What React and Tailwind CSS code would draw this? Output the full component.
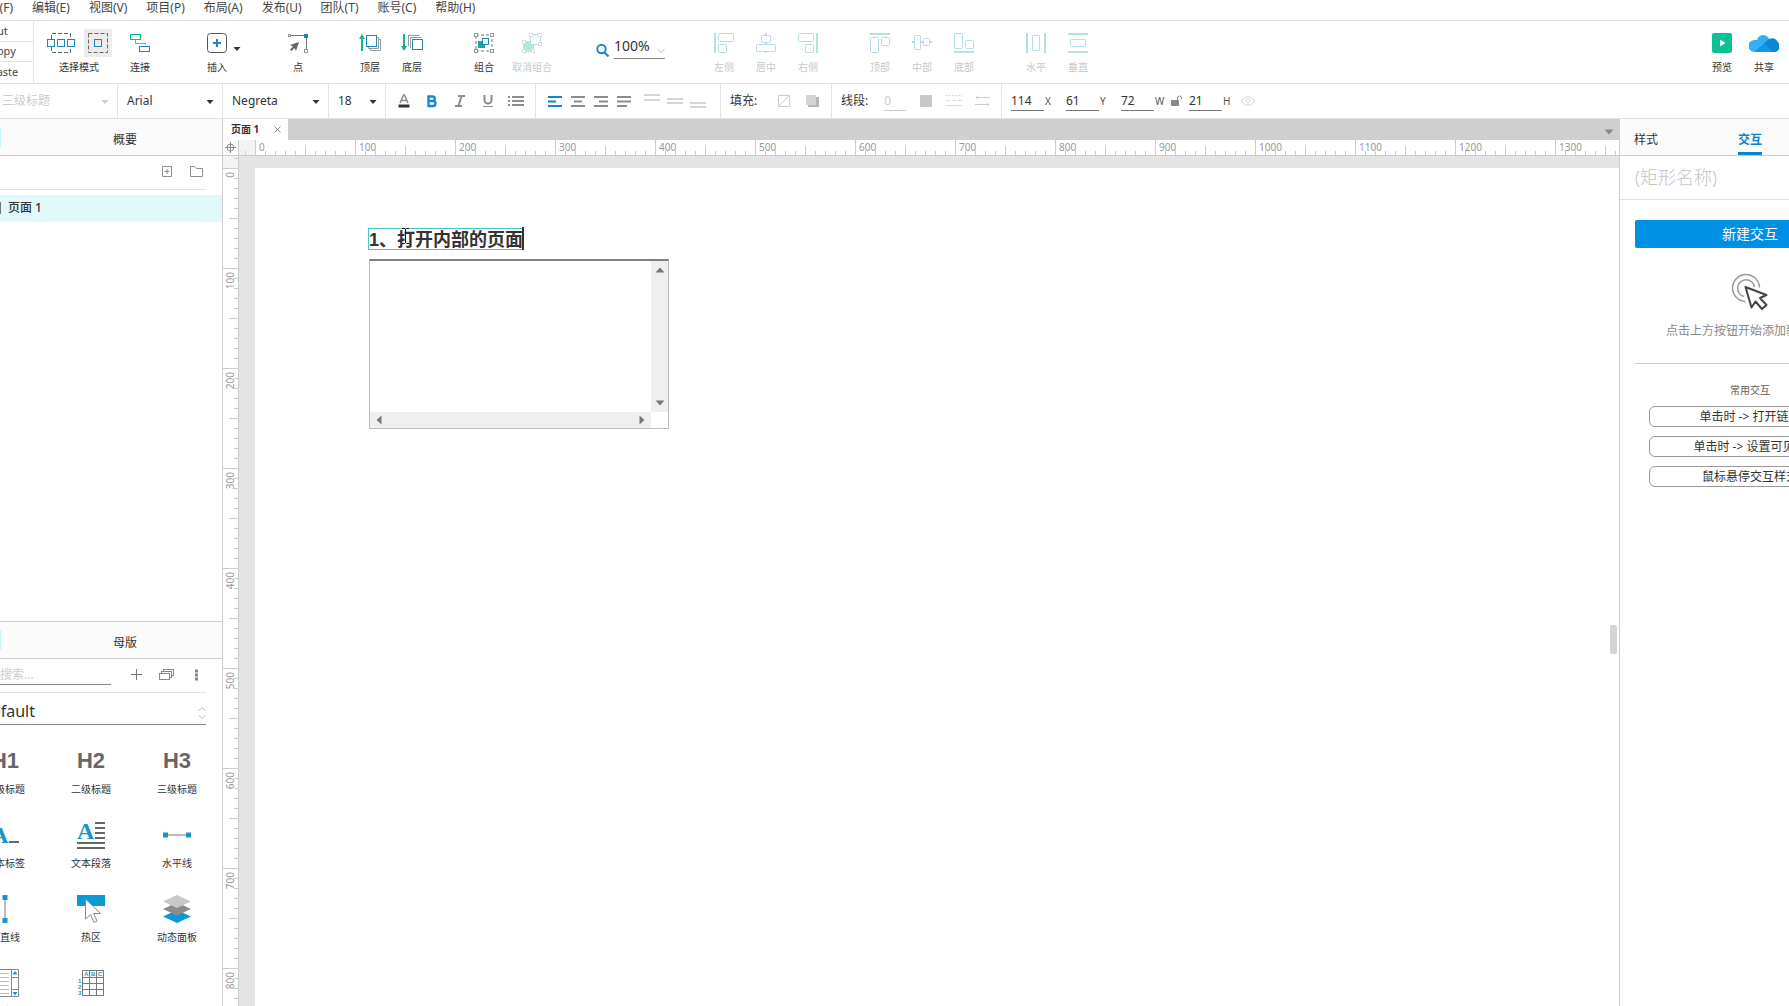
const MENU = ["编辑(E)", "视图(V)", "项目(P)", "布局(A)", "发布(U)", "团队(T)", "账号(C)", "帮助(H)"];

const BLUE = "#1e86b8";
const GREEN = "#12b886";
const GRAY = "#8c8c8c";

function Caret({ className = "" }) {
  return (
    <svg className={`w-2 h-1 ${className}`} viewBox="0 0 8 4" fill="currentColor">
      <path d="M0.5 0h7L4 4z" />
    </svg>
  );
}

function ScrollArrow({ className = "" }) {
  return (
    <svg className={`size-[10px] ${className}`} viewBox="0 0 10 10" fill="currentColor">
      <path d="M0.5 2.5h9L5 7.500z" />
    </svg>
  );
}

function Icon({ children, w = 20, h = 20 }) {
  return (
    <svg width={w} height={h} viewBox={`0 0 ${w} ${h}`} fill="none" className="shrink-0">
      {children}
    </svg>
  );
}

function Tool({ label, children, disabled, className = "w-[42px]" }) {
  return (
    <button
      type="button"
      disabled={disabled}
      className={`flex flex-col items-center shrink-0 text-[10px] leading-5 whitespace-nowrap ${
        disabled ? "text-[#c8c8c8]" : "text-[#333]"
      } ${className}`}
    >
      <span className="flex h-7 items-center">{children}</span>
      {label}
    </button>
  );
}

function Handles({ color, points }) {
  return points.map(([x, y]) => (
    <rect key={`${x}-${y}`} x={x} y={y} width="3" height="3" fill="#fff" stroke={color} />
  ));
}

function MenuBar() {
  return (
    <nav className="flex h-[21px] items-start gap-[19px] overflow-hidden border-b border-[#e2e2e2] text-xs leading-4 text-[#444]">
      <div className="flex w-[13px] shrink-0 justify-end">
        <button type="button" className="whitespace-nowrap">文件(F)</button>
      </div>
      {MENU.map((item) => (
        <button key={item} type="button" className="shrink-0 whitespace-nowrap">
          {item}
        </button>
      ))}
    </nav>
  );
}

function Clipboard() {
  return (
    <div className="grid w-[34px] shrink-0 grid-rows-3 divide-y divide-[#e2e2e2] overflow-hidden border-r border-[#e2e2e2] text-[11px] text-[#444]">
      {["Cut", "Copy", "Paste"].map((item) => (
        <button key={item} type="button" className="-ml-[10px] text-left">
          {item}
        </button>
      ))}
    </div>
  );
}

function SelectMode() {
  return (
    <div className="ml-[11px] flex w-[68px] shrink-0 flex-col items-center text-[10px] leading-5 text-[#333]">
      <div className="flex h-7 items-center gap-[9px]">
        <button type="button" aria-label="相交选择">
          <Icon w={28}>
            <path d="M4.5 6V0.5h19V6M4.5 14v5.5h19V14" stroke="#666" strokeDasharray="4 2" />
            <g stroke={BLUE} fill="#fff">
              <rect x="0.5" y="6.5" width="7" height="7" />
              <rect x="10.5" y="6.5" width="7" height="7" />
              <rect x="20.5" y="6.5" width="7" height="7" />
            </g>
          </Icon>
        </button>
        <button type="button" aria-label="包含选择" className="flex size-7 items-center justify-center bg-[#ececec]">
          <Icon>
            <rect x="0.5" y="0.5" width="19" height="19" stroke="#666" strokeDasharray="4 2" />
            <rect x="6.5" y="6.5" width="7" height="7" stroke={BLUE} />
          </Icon>
        </button>
      </div>
      选择模式
    </div>
  );
}

function AlignTools() {
  const line = "#b4e4d6";
  const box = "#b4dbe8";
  return (
    <>
      <div className="flex">
        <Tool label="左侧" disabled>
          <Icon>
            <path d="M1 0v20" stroke={line} strokeWidth="2" />
            <rect x="4.5" y="0.5" width="15" height="8" rx="1" stroke={box} />
            <rect x="4.5" y="11.5" width="8" height="8" rx="1" stroke={box} />
          </Icon>
        </Tool>
        <Tool label="居中" disabled>
          <Icon>
            <path d="M10 0v20" stroke={box} strokeWidth="2" />
            <rect x="5.5" y="2.5" width="9" height="7" rx="1" stroke={box} fill="#fff" />
            <rect x="0.5" y="11.5" width="19" height="7" rx="1" stroke={box} fill="#fff" />
          </Icon>
        </Tool>
        <Tool label="右侧" disabled>
          <Icon>
            <path d="M19 0v20" stroke={line} strokeWidth="2" />
            <rect x="0.5" y="0.5" width="15" height="8" rx="1" stroke={box} />
            <rect x="7.5" y="11.5" width="8" height="8" rx="1" stroke={box} />
          </Icon>
        </Tool>
      </div>
      <div className="flex">
        <Tool label="顶部" disabled>
          <Icon>
            <path d="M0 1h20" stroke={line} strokeWidth="2" />
            <rect x="0.5" y="4.5" width="8" height="15" rx="1" stroke={box} />
            <rect x="11.5" y="4.5" width="8" height="8" rx="1" stroke={box} />
          </Icon>
        </Tool>
        <Tool label="中部" disabled>
          <Icon>
            <path d="M0 9h20" stroke={box} strokeWidth="2" />
            <rect x="2.5" y="2.5" width="6" height="14" rx="1" stroke={box} fill="#fff" />
            <rect x="11.5" y="5.5" width="6" height="7" rx="1" stroke={box} fill="#fff" />
          </Icon>
        </Tool>
        <Tool label="底部" disabled>
          <Icon>
            <path d="M0 19h20" stroke={line} strokeWidth="2" />
            <rect x="0.5" y="0.5" width="8" height="15" rx="1" stroke={box} />
            <rect x="11.5" y="7.5" width="8" height="8" rx="1" stroke={box} />
          </Icon>
        </Tool>
      </div>
      <div className="flex">
        <Tool label="水平" disabled>
          <Icon>
            <path d="M1 0v20M19 0v20" stroke={line} strokeWidth="2" />
            <rect x="6.5" y="2.5" width="7" height="15" rx="1" stroke={box} />
          </Icon>
        </Tool>
        <Tool label="垂直" disabled>
          <Icon>
            <path d="M0 1h20M0 19h20" stroke={line} strokeWidth="2" />
            <rect x="2.5" y="6.5" width="15" height="7" rx="1" stroke={box} />
          </Icon>
        </Tool>
      </div>
    </>
  );
}

function Toolbar() {
  return (
    <div className="flex h-[63px] border-b border-[#e2e2e2]">
      <Clipboard />
      <div className="flex flex-1 items-start pt-2">
        <SelectMode />
        <Tool label="连接" className="ml-[6px] w-[42px]">
          <Icon>
            <path d="M5.5 6v4.5h10V12" stroke="#999" />
            <rect x="0.5" y="1.5" width="10" height="5" stroke={GREEN} />
            <rect x="9.5" y="13.5" width="10" height="5" stroke={BLUE} />
          </Icon>
        </Tool>
        <div className="ml-9 flex w-11 items-start">
          <Tool label="插入" className="w-10">
            <Icon>
              <rect x="0.5" y="0.5" width="19" height="19" rx="3" stroke="#555" />
              <path d="M10 6v8M6 10h8" stroke={BLUE} strokeWidth="2" />
            </Icon>
          </Tool>
          <button type="button" aria-label="更多插入" className="-ml-1 mt-[18px] text-[#333]">
            <Caret />
          </button>
        </div>
        <div className="ml-9 flex items-start gap-[30px]">
          <Tool label="点">
            <Icon>
              <path d="M3 2.5h14M18.500 4v13" stroke="#777" />
              <rect x="0.500" y="1.500" width="2" height="2" stroke="#999" />
              <rect x="16" y="1" width="4" height="4" fill={BLUE} />
              <rect x="16.500" y="16.500" width="3" height="3" stroke="#999" fill="#fff" />
              <path d="M11 9L2 12l3 1.500-3 3 1.500 1.500 3-3L8 18z" fill="#666" />
            </Icon>
          </Tool>
          <div className="flex">
            <Tool label="顶层">
              <Icon w={22}>
                <path d="M3 18V5" stroke={GREEN} strokeWidth="2" />
                <path d="M0 6l3-5 3 5z" fill={GREEN} />
                <path d="M11.500 16v1.500h10v-11H20" stroke="#999" />
                <path d="M9.500 14v1.500h10v-11H18" stroke="#999" />
                <rect x="7.500" y="2.500" width="10" height="11" fill="#fff" stroke={BLUE} />
              </Icon>
            </Tool>
            <Tool label="底层">
              <Icon w={22}>
                <path d="M3 1v13" stroke={GREEN} strokeWidth="2" />
                <path d="M0 13l3 5 3-5z" fill={GREEN} />
                <path d="M7.500 13V2.500h11" stroke="#999" />
                <path d="M9.500 15V4.500h11" stroke="#999" />
                <rect x="11.500" y="6.500" width="10" height="10" fill="#fff" stroke={BLUE} />
              </Icon>
            </Tool>
          </div>
          <div className="flex">
            <Tool label="组合">
              <Icon>
                <rect x="2" y="2" width="16" height="16" stroke="#777" strokeDasharray="3 2" />
                <Handles color="#999" points={[[0.5, 0.5], [16.5, 0.5], [0.5, 16.5], [16.5, 16.5]]} />
                <rect x="4" y="8" width="7" height="7" fill="#12a99a" />
                <rect x="8.500" y="5.500" width="6" height="6" fill="#fff" stroke={BLUE} />
              </Icon>
            </Tool>
            <Tool label="取消组合" disabled className="w-[54px]">
              <Icon>
                <rect x="1" y="8" width="11" height="11" fill="#b4e8d8" />
                <rect x="8.500" y="1.500" width="10" height="10" fill="#fff" stroke="#b4dbe8" />
                <Handles
                  color="#ddd"
                  points={[[7.5, 0.5], [16.5, 0.5], [16.5, 9.5], [0.5, 7.5], [0.5, 16.5], [9.5, 16.5]]}
                />
              </Icon>
            </Tool>
          </div>
        </div>
        <div className="ml-[37px] flex shrink-0 items-end gap-[5px] pt-1">
          <svg width="13" height="14" viewBox="0 0 13 14" fill="none" stroke="#1b87c9" strokeWidth="2" className="mb-[2px]">
            <circle cx="5.500" cy="6" r="4.200" />
            <path d="M8.500 9.500l4 4" />
          </svg>
          <label className="relative flex h-[26px] w-[51px] border-b border-[#888]">
            <span className="sr-only">缩放</span>
            <select className="w-full appearance-none bg-transparent text-sm leading-5 text-[#333]">
              <option>100%</option>
            </select>
            <svg viewBox="0 0 8 4" fill="none" stroke="#bbb" className="absolute right-0 bottom-[5px] h-1 w-2">
              <path d="M0.500 0L4 3.500 7.500 0" />
            </svg>
          </label>
        </div>
        <div className="ml-[38px] flex items-start gap-[30px]">
          <AlignTools />
        </div>
        <div className="ml-auto flex pr-1">
          <Tool label="预览">
            <Icon>
              <rect width="20" height="20" rx="2" fill="#0ac295" />
              <path d="M8 6.500v7l5.500-3.500z" fill="#fff" />
            </Icon>
          </Tool>
          <Tool label="共享">
            <Icon w={30}>
              <path d="M6 19a6 6 0 0 1-1-12h3a6.500 6.500 0 0 1 11-3l2 3a6 6 0 0 1 4 12z" fill="#36aef5" />
              <path d="M5 19L19 7a5 5 0 0 1 6 1 5.500 5.500 0 0 1 0 11z" fill="#1496e2" />
              <path d="M15 10.500L24 19h1a5.500 5.500 0 0 0 4-9.500A6 6 0 0 0 19 7z" fill="#0d87d4" />
            </Icon>
          </Tool>
        </div>
      </div>
    </div>
  );
}

function Dropdown({ label, value, disabled, className }) {
  return (
    <label className={`relative flex shrink-0 items-center border-r border-[#e2e2e2] ${className}`}>
      <span className="sr-only">{label}</span>
      <select
        disabled={disabled}
        className={`w-full appearance-none bg-transparent text-xs leading-5 opacity-100 ${
          disabled ? "text-[#ccc]" : "text-[#333]"
        }`}
      >
        <option>{value}</option>
      </select>
      <Caret className={`absolute right-2 top-4 ${disabled ? "text-[#ccc]" : "text-[#333]"}`} />
    </label>
  );
}

function NumberField({ label, value }) {
  return (
    <label className="flex items-center gap-px text-[10px] text-[#555]">
      <input
        defaultValue={value}
        className="h-[19px] w-[33px] border-b border-[#777] text-xs text-[#333] outline-none"
      />
      <span className="w-[9px]">{label}</span>
    </label>
  );
}

function FormatButton({ label, children, className = "w-[23px]" }) {
  return (
    <button type="button" aria-label={label} className={`flex shrink-0 justify-center ${className}`}>
      {children}
    </button>
  );
}

const ALIGNS = [
  { label: "左对齐", d: "M0 2h14M0 6.500h8M0 11h14", color: "#1286c6" },
  { label: "居中对齐", d: "M0 2h14M3 6.500h8M0 11h14", color: GRAY },
  { label: "右对齐", d: "M0 2h14M5 6.500h9M0 11h14", color: GRAY },
  { label: "两端对齐", d: "M0 2h14M0 6.500h14M0 11h10", color: GRAY },
];

const VALIGNS = [
  { label: "顶端", d: "M0 1h16M0 6h16" },
  { label: "垂直居中", d: "M0 5h16M0 9h16" },
  { label: "底端", d: "M0 9h16M0 13h16" },
];

function FormatBar() {
  return (
    <div className="flex h-[35px] border-b border-[#e2e2e2]">
      <Dropdown label="样式" value="三级标题" disabled className="w-[118px] pl-[2px]" />
      <Dropdown label="字体" value="Arial" className="w-[105px] pl-[9px]" />
      <Dropdown label="字重" value="Negreta" className="w-[106px] pl-[9px]" />
      <Dropdown label="字号" value="18" className="w-[57px] pl-[9px]" />
      <div className="flex w-[150px] shrink-0 items-center border-r border-[#e2e2e2] pl-1">
        <FormatButton label="文字颜色" className="w-7">
          <Icon w={12} h={14}>
            <path d="M2 9L5.500 1h1L10 9M3 6.500h6" stroke={GRAY} strokeWidth="1.500" />
            <path d="M0.500 12h11" stroke="#333" strokeWidth="3" />
          </Icon>
        </FormatButton>
        <FormatButton label="粗体" className="w-7">
          <Icon w={12} h={14}>
            <path
              d="M2.500 2.500h4a2.200 2.200 0 0 1 0 4.500h-4zM2.500 7h4.500a2.500 2.500 0 0 1 0 5h-4.500z"
              stroke="#1286d6"
              strokeWidth="2.300"
            />
          </Icon>
        </FormatButton>
        <FormatButton label="斜体" className="w-7">
          <Icon w={12} h={14}>
            <path d="M4 2h7M1 12h7M7.500 2l-3 10" stroke={GRAY} strokeWidth="2" />
          </Icon>
        </FormatButton>
        <FormatButton label="下划线" className="w-7">
          <Icon w={12} h={14}>
            <path d="M2.500 1v5a3.500 3.500 0 0 0 7 0V1" stroke={GRAY} strokeWidth="2" />
            <path d="M1 12.500h10" stroke={GRAY} />
          </Icon>
        </FormatButton>
        <FormatButton label="项目符号" className="w-7">
          <Icon w={16} h={12}>
            <path d="M0 2h2M4 2h12M0 6h2M4 6h12M0 10h2M4 10h12" stroke={GRAY} strokeWidth="2" />
          </Icon>
        </FormatButton>
      </div>
      <div className="flex w-[185px] shrink-0 items-center border-r border-[#e2e2e2] pl-[7px]">
        {ALIGNS.map((a) => (
          <FormatButton key={a.label} label={a.label}>
            <Icon w={14} h={13}>
              <path d={a.d} stroke={a.color} strokeWidth="2" />
            </Icon>
          </FormatButton>
        ))}
        <div className="ml-[5px] flex">
          {VALIGNS.map((a) => (
            <FormatButton key={a.label} label={a.label}>
              <Icon w={16} h={14}>
                <path d={a.d} stroke="#d6d6d6" strokeWidth="2" />
              </Icon>
            </FormatButton>
          ))}
        </div>
      </div>
      <div className="flex w-[111px] shrink-0 items-center border-r border-[#e2e2e2] pl-[9px] text-xs text-[#333]">
        填充:
        <div className="ml-auto flex gap-4 pr-3">
          <button type="button" aria-label="填充颜色">
            <Icon w={12} h={12}>
              <path d="M0.500 0.500h11v11h-11zM0.500 11.500l11-11" stroke="#ccc" />
            </Icon>
          </button>
          <button type="button" aria-label="阴影">
            <Icon w={13} h={12}>
              <rect x="2" y="2" width="11" height="10" fill="#b8b8b8" />
              <rect width="10" height="10" fill="#d4d4d4" />
            </Icon>
          </button>
        </div>
      </div>
      <div className="flex w-[170px] shrink-0 items-center border-r border-[#e2e2e2] pl-[9px] text-xs text-[#333]">
        <label htmlFor="line-width">线段:</label>
        <input
          id="line-width"
          defaultValue="0"
          disabled
          className="ml-4 h-[19px] w-[22px] border-b border-[#ccc] text-[#ccc]"
        />
        <div className="ml-auto flex gap-[13px] pr-[11px]">
          <button type="button" aria-label="线段颜色">
            <Icon w={14} h={12}>
              <rect x="1" width="12" height="12" fill="#c8c8c8" />
            </Icon>
          </button>
          <button type="button" aria-label="线型">
            <Icon w={16} h={12}>
              <path d="M0 0.500h16" stroke="#ddd" strokeDasharray="2 1" />
              <path d="M0 5.500h16" stroke="#ddd" strokeDasharray="4 2" />
              <path d="M0 10.500h16" stroke="#ddd" />
            </Icon>
          </button>
          <button type="button" aria-label="箭头">
            <Icon w={15} h={12}>
              <path d="M15 2.500H1M3 0.500l-2 2 2 2M0 9.500h14M12 7.500l2 2-2 2" stroke="#ccc" />
            </Icon>
          </button>
        </div>
      </div>
      <div className="flex shrink-0 items-center gap-3 pl-[9px]">
        <NumberField label="X" value="114" />
        <NumberField label="Y" value="61" />
        <div className="flex items-center gap-[7px]">
          <NumberField label="W" value="72" />
          <button type="button" aria-label="锁定宽高比">
            <Icon w={11} h={12}>
              <rect y="5" width="8" height="6" rx="1" fill="#888" />
              <path d="M6.500 5V3a2 2 0 0 1 4 0v1" stroke="#888" />
            </Icon>
          </button>
          <NumberField label="H" value="21" />
        </div>
        <button type="button" aria-label="隐藏" className="-ml-[3px]">
          <Icon w={14} h={10}>
            <path d="M0.500 5c3-5.500 10-5.500 13 0-3 5.500-10 5.500-13 0z" stroke="#d4d4d4" />
            <circle cx="7" cy="5" r="2" stroke="#d4d4d4" />
          </Icon>
        </button>
      </div>
    </div>
  );
}

function PanelTabs({ title }) {
  return (
    <div className="flex h-[37px] items-center justify-between border-b border-[#ccc] bg-[#fbfbfb] text-xs text-[#333]">
      <span className="h-5 w-px bg-[#c5f8fd]" />
      <button type="button" className="mr-[85px] pt-[5px]">
        {title}
      </button>
    </div>
  );
}

function Widget({ label, children }) {
  return (
    <li className="flex h-[74px] flex-col items-center text-[10px] leading-4 text-[#333]">
      <div className="flex h-8 items-center">{children}</div>
      <span className="mt-1 whitespace-nowrap">{label}</span>
    </li>
  );
}

function WidgetLibrary() {
  const heading = "text-[22px] font-bold text-[#666] font-['Liberation_Sans',sans-serif]";
  return (
    <ul className="-ml-[38px] mt-5 grid w-[258px] grid-cols-3">
      <Widget label="一级标题">
        <span className={heading}>H1</span>
      </Widget>
      <Widget label="二级标题">
        <span className={heading}>H2</span>
      </Widget>
      <Widget label="三级标题">
        <span className={heading}>H3</span>
      </Widget>
      <Widget label="文本标签">
        <div className="flex items-baseline">
          <span className="font-['Liberation_Serif',serif] text-2xl font-bold text-[#1496c8]">A</span>
          <span className="h-[2px] w-[10px] bg-[#666]" />
        </div>
      </Widget>
      <Widget label="文本段落">
        <svg width="28" height="28" viewBox="0 0 28 28">
          <text x="0" y="18" fontSize="24" fontWeight="bold" fill="#1496c8" fontFamily="Liberation Serif, serif">
            A
          </text>
          <path d="M18 2h10M18 7h10M18 12h10M18 17h10M0 22h28M0 27h28" stroke="#666" strokeWidth="2" />
        </svg>
      </Widget>
      <Widget label="水平线">
        <Icon w={28} h={6}>
          <path d="M4 3h20" stroke="#777" />
          <path d="M0 0.500h5v5H0zM23 0.500h5v5h-5z" fill="#1496d0" />
        </Icon>
      </Widget>
      <Widget label="垂直线">
        <Icon w={6} h={28}>
          <path d="M3 4v20" stroke="#777" />
          <path d="M0.500 0v5h5V0zM0.500 23v5h5v-5z" fill="#1496d0" />
        </Icon>
      </Widget>
      <Widget label="热区">
        <Icon w={28} h={28}>
          <path d="M0 0h28v11H0z" fill="#0a9ad8" />
          <path d="M8.500 4v20l5-4.500 3.500 8 3-1.500-3.500-7.500h7z" fill="#fff" stroke="#888" />
        </Icon>
      </Widget>
      <Widget label="动态面板">
        <Icon w={28} h={28}>
          <path d="M14 15l14 6.500L14 28 0 21.500z" fill="#0a9ad8" />
          <path d="M14 7.500L28 14l-14 6.500L0 14z" fill="#8c8c8c" />
          <path d="M14 0l14 6.500L14 13 0 6.500z" fill="#c8c8c8" />
        </Icon>
      </Widget>
      <Widget label="内联框架">
        <Icon w={28} h={28}>
          <path d="M0.500 0.500h27v27h-27zM20.500 0v28M20.500 8.500h7M20.500 20.500h7" stroke="#888" />
          <path d="M3 4.500h15M3 8.500h15M3 12.500h15M3 16.500h15M3 20.500h15M3 24.500h15" stroke="#bbb" />
          <path d="M21.500 5.500h5L24 2zM21.500 23h5L24 26.500z" fill="#1496d0" />
        </Icon>
      </Widget>
      <Widget label="中继器">
        <svg width="28" height="28" viewBox="0 0 28 28" fill="none">
          <path
            d="M5.500 1.500h21v25h-21zM5.500 8.500h21M5.500 14.500h21M5.500 20.500h21M12.500 1.500v25M19.500 1.500v25"
            stroke="#777"
          />
          <g fill="#1496c8" fontSize="6" fontWeight="bold" fontFamily="Liberation Sans, sans-serif">
            <text x="7" y="7">A</text>
            <text x="14" y="7">B</text>
            <text x="21" y="7">C</text>
            <text x="1" y="14">1</text>
            <text x="1" y="20">2</text>
            <text x="1" y="26">3</text>
          </g>
        </svg>
      </Widget>
    </ul>
  );
}

function Sidebar() {
  return (
    <aside className="flex w-[223px] shrink-0 flex-col overflow-hidden border-r border-[#ccc]">
      <section className="min-h-0 flex-[503]">
        <PanelTabs title="概要" />
        <div className="mr-4 flex h-[34px] items-center justify-end gap-[18px] border-b border-[#e2e2e2] pr-[2px] pb-[2px]">
          <button type="button" aria-label="添加页面">
            <Icon w={10} h={12}>
              <path d="M0.500 0.500h9v10h-9zM5 3v5M2.500 5.500h5" stroke={GRAY} />
            </Icon>
          </button>
          <button type="button" aria-label="添加文件夹">
            <Icon w={14} h={12}>
              <path d="M0.500 10.500v-10h4l2 2h6v8z" stroke={GRAY} />
            </Icon>
          </button>
        </div>
        <div className="mt-[5px] flex h-[27px] items-center bg-[#e1f8fa] pb-[2px] text-xs font-medium text-[#333]">
          <span className="mr-[7px] h-3 w-px bg-[#777]" />
          页面 1
        </div>
      </section>

      <section className="min-h-0 flex-[384] border-t border-[#ccc]">
        <PanelTabs title="母版" />
        <div className="mr-4 flex h-[34px] items-start border-b border-[#e2e2e2] pt-[5px]">
          <input
            aria-label="搜索"
            placeholder="搜索..."
            className="h-[21px] w-[111px] border-b border-[#888] text-xs outline-none placeholder:text-[#ccc]"
          />
          <div className="ml-5 flex h-[21px] items-center gap-[17px]">
            <button type="button" aria-label="添加">
              <Icon w={11} h={11}>
                <path d="M5.500 0v11M0 5.500h11" stroke="#777" />
              </Icon>
            </button>
            <button type="button" aria-label="元件库">
              <Icon w={15} h={12}>
                <g stroke="#888" fill="#fff">
                  <rect x="4.500" y="0.500" width="10" height="6" />
                  <rect x="2.500" y="2.500" width="10" height="6" />
                  <rect x="0.500" y="4.500" width="10" height="6" />
                </g>
              </Icon>
            </button>
            <button type="button" aria-label="更多">
              <Icon w={11} h={12}>
                <path d="M4 0.500h3v3H4zM4 4.500h3v3H4zM4 8.500h3v3H4z" fill="#888" />
              </Icon>
            </button>
          </div>
        </div>
        <label className="relative mr-4 flex h-8 items-center overflow-hidden border-b border-[#888]">
          <span className="sr-only">元件库</span>
          <select className="-ml-5 w-full appearance-none bg-transparent pt-[5px] text-base leading-6 text-[#333]">
            <option>Default</option>
          </select>
          <svg viewBox="0 0 8 12" fill="none" stroke="#bbb" className="absolute right-0 bottom-[5px] h-3 w-2">
            <path d="M0.500 4L4 0.500 7.500 4M0.500 8L4 11.500 7.500 8" />
          </svg>
        </label>
        <WidgetLibrary />
      </section>
    </aside>
  );
}

const TICKS = [10, 20, 30, 40, 50, 60, 70, 80, 90];

function HorizontalRuler() {
  return (
    <div className="flex h-4 min-w-0 flex-1 overflow-hidden border-b border-[#ccc] text-[10px] leading-[15px] text-[#999]">
      <div className="flex w-4 shrink-0 items-end bg-[#f3f3f3] pl-[6px]">
        <span className="h-1 w-px bg-[#ccc]" />
      </div>
      {Array.from({ length: 14 }, (_, i) => (
        <div key={i} className="relative w-[100px] shrink-0 border-l border-[#ccc] pl-[3px]">
          <svg className="absolute -left-px top-0" width="100" height="15" stroke="#ccc">
            {TICKS.map((t) => (
              <path key={t} d={`M${t + 0.5} ${t === 50 ? 6 : 11}V15`} />
            ))}
          </svg>
          <span className="relative">{i * 100}</span>
        </div>
      ))}
    </div>
  );
}

function VerticalRuler() {
  return (
    <div className="w-4 shrink-0 overflow-hidden border-r border-[#ccc] text-[10px] leading-[15px] text-[#999]">
      <div className="flex h-3 justify-end bg-[#f3f3f3] pt-[2px]">
        <span className="h-px w-1 bg-[#ccc]" />
      </div>
      {Array.from({ length: 9 }, (_, i) => (
        <div key={i} className="relative h-[100px] border-t border-[#ccc] pt-[3px]">
          <svg className="absolute -top-px left-0" width="15" height="100" stroke="#ccc">
            {TICKS.map((t) => (
              <path key={t} d={`M${t === 50 ? 6 : 11} ${t + 0.5}H15`} />
            ))}
          </svg>
          <span className="relative block rotate-180 [writing-mode:vertical-rl]">
            <span className="float-right">{i * 100}</span>
          </span>
        </div>
      ))}
    </div>
  );
}

function InlineFrame() {
  return (
    <div className="absolute left-[114px] top-[91px] grid h-[170px] w-[300px] grid-cols-[1fr_17px] grid-rows-[1fr_16px] border border-t-2 border-[#bbb] border-t-[#808080] text-[#777]">
      <div />
      <div className="flex flex-col items-center justify-between bg-[#efefef] py-1">
        <ScrollArrow className="rotate-180" />
        <ScrollArrow />
      </div>
      <div className="flex items-center justify-between bg-[#efefef] px-1">
        <ScrollArrow className="rotate-90" />
        <ScrollArrow className="-rotate-90" />
      </div>
      <div />
    </div>
  );
}

function Canvas() {
  return (
    <main className="flex min-w-0 flex-1 flex-col">
      <div className="flex h-[21px] items-stretch bg-[#cfcfcf]">
        <div className="flex w-[65px] items-center justify-between bg-white pr-[7px] pl-2 text-[10px] font-bold text-[#333]">
          页面 1
          <button type="button" aria-label="关闭">
            <Icon w={7} h={7}>
              <path d="M0.500 0.500l6 6M6.500 0.500l-6 6" stroke={GRAY} />
            </Icon>
          </button>
        </div>
        <button type="button" aria-label="页面列表" className="ml-auto pr-[5px] pt-1 text-[#888]">
          <ScrollArrow />
        </button>
      </div>
      <div className="flex">
        <div className="flex size-4 shrink-0 items-center justify-center border-r border-b border-[#ccc]">
          <Icon w={11} h={11}>
            <circle cx="5.500" cy="5.500" r="3.500" stroke={GRAY} />
            <path d="M5.500 0v11M0 5.500h11" stroke={GRAY} />
          </Icon>
        </div>
        <HorizontalRuler />
      </div>
      <div className="flex min-h-0 flex-1">
        <VerticalRuler />
        <div className="flex min-w-0 flex-1 bg-[#e4e4e4] pt-3 pl-4">
          <div className="relative flex-1 bg-white">
            <input
              aria-label="三级标题"
              defaultValue="1、打开内部的页面"
              className="absolute left-[113px] top-[60px] h-[22px] w-[155px] border border-[#4cc4cc] pb-[2px] text-lg leading-[18px] font-bold text-[#333] outline-none font-['Liberation_Sans','Noto_Sans_CJK_SC',sans-serif]"
            />
            <span className="absolute left-[267px] top-[59px] h-[23px] w-[2px] bg-[#333]" />
            <svg className="absolute left-[147px] top-[60px]" width="7" height="16" fill="none" stroke="#111">
              <path d="M0 0.500h2.500l1 1 1-1H7M3.500 1v14M0 15.500h2.500l1-1 1 1H7" />
            </svg>
            <InlineFrame />
            <span className="absolute right-[2px] top-[457px] h-[29px] w-[7px] rounded-xs bg-[#d4d4d4]" />
          </div>
        </div>
      </div>
    </main>
  );
}

const SHORTCUTS = ["单击时 -> 打开链接", "单击时 -> 设置可见性", "鼠标悬停交互样式"];

function Inspector() {
  return (
    <aside className="w-[170px] shrink-0 overflow-hidden border-l border-[#ccc]">
      <div className="w-[260px]">
        <div className="flex h-[37px] items-stretch border-b border-[#ccc] bg-[#fbfbfb] pl-[14px] text-xs text-[#333]">
          <button type="button" className="pt-[5px]">样式</button>
          <button type="button" className="ml-20 border-b-3 border-[#0a84c6] pt-2 font-bold text-[#0a84c6]">
            交互
          </button>
        </div>
        <div className="flex h-11 items-center border-b border-[#e2e2e2] px-[15px]">
          <input
            aria-label="矩形名称"
            placeholder="(矩形名称)"
            className="w-full pb-px text-lg leading-6 font-light outline-none placeholder:text-[#c4c4c4]"
          />
        </div>
        <div className="px-[15px] pt-5">
          <button type="button" className="h-7 w-full rounded-xs bg-[#0090e3] text-sm text-white">
            新建交互
          </button>
          <div className="mt-[25px] flex flex-col items-center border-b border-[#ccc] pb-6">
            <Icon w={38} h={38}>
              <g stroke="#999" strokeWidth="1.500">
                <path d="M14.500 28.500A13.500 13.500 0 1 1 28.500 14.500" />
                <path d="M13 23.500A8.500 8.500 0 1 1 23.500 14" />
              </g>
              <path
                d="M14.500 14l6 20.500 4-6 6.500 7.500 4.500-4-6.500-7 6.500-3z"
                fill="#fff"
                stroke="#444"
                strokeWidth="2"
                strokeLinejoin="round"
              />
            </Icon>
            <p className="mt-3 text-xs leading-4 whitespace-nowrap text-[#888]">点击上方按钮开始添加新的交互</p>
          </div>
          <h2 className="mt-[18px] text-center text-[10px] leading-4 font-medium text-[#777]">常用交互</h2>
          <div className="mx-[14px] mt-2 flex flex-col gap-[9px]">
            {SHORTCUTS.map((item) => (
              <button
                key={item}
                type="button"
                className="h-[21px] rounded-md border border-[#999] text-xs leading-4 whitespace-nowrap text-[#333]"
              >
                {item}
              </button>
            ))}
          </div>
        </div>
      </div>
    </aside>
  );
}

export default function App() {
  return (
    <div className="flex h-screen flex-col overflow-hidden bg-white font-['Noto_Sans','Noto_Sans_CJK_SC',sans-serif]">
      <MenuBar />
      <Toolbar />
      <FormatBar />
      <div className="flex min-h-0 flex-1">
        <Sidebar />
        <Canvas />
        <Inspector />
      </div>
    </div>
  );
}
